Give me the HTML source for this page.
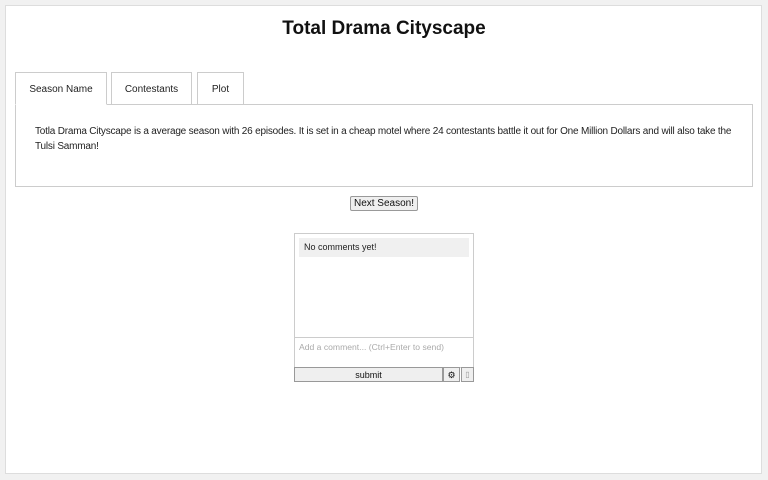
<!DOCTYPE html>
<html><head><style>
body{margin:0;background:#f1f1f1;font-family:"Liberation Sans",sans-serif;width:768px;height:480px;position:relative;overflow:hidden}
.card{position:absolute;left:5px;top:5px;width:757px;height:469px;background:#fff;border:1px solid #ddd;box-sizing:border-box}
.abs{position:absolute}
h1{position:absolute;left:0;width:768px;top:18px;margin:0;text-align:center;font-size:19px;font-weight:bold;color:#111}
.tab{position:absolute;top:72px;height:33px;border:1px solid #ccc;box-sizing:border-box;background:#fff;font-size:10px;color:#222;text-align:center;line-height:33px}
.box{position:absolute;left:15px;top:104px;width:738px;height:83px;border:1px solid #ccc;box-sizing:border-box}
.txt{position:absolute;left:35px;top:124px;width:702px;font-size:10px;letter-spacing:-0.2px;line-height:15px;color:#222}
.btn{position:absolute;background:#efefef;border:1px solid #999;box-sizing:border-box;font-size:10px;text-align:center;color:#111}
</style></head><body>
<div class="card"></div>
<h1>Total Drama Cityscape</h1>
<div class="box"></div>
<div class="tab" style="left:15px;width:92px;border-bottom-color:#fff">Season Name</div>
<div class="tab" style="left:111px;width:81px">Contestants</div>
<div class="tab" style="left:197px;width:47px">Plot</div>
<div class="txt">Totla Drama Cityscape is a average season with 26 episodes. It is set in a cheap motel where 24 contestants battle it out for One Million Dollars and will also take the Tulsi Samman!</div>
<div class="btn" style="left:350px;top:196px;width:68px;height:15px;line-height:14px;border-radius:2px">Next Season!</div>
<div class="abs" style="left:294px;top:233px;width:180px;height:135px;border:1px solid #ccc;box-sizing:border-box"></div>
<div class="abs" style="left:299px;top:238px;width:170px;height:19px;background:#f0f0f0;font-size:9px;line-height:19px;padding-left:5px;box-sizing:border-box;color:#222">No comments yet!</div>
<div class="abs" style="left:294px;top:337px;width:180px;height:1px;background:#ccc"></div>
<div class="abs" style="left:299px;top:342px;font-size:8.6px;color:#aaa">Add a comment... (Ctrl+Enter to send)</div>
<div class="btn" style="left:294px;top:367px;width:149px;height:15px;line-height:14px;font-size:9px">submit</div>
<div class="btn" style="left:443px;top:367px;width:17px;height:15px;line-height:14px;font-size:9px">⚙</div>
<div class="btn" style="left:461px;top:367px;width:13px;height:15px;line-height:14px;font-size:8px;color:#999">▯</div>
</body></html>
